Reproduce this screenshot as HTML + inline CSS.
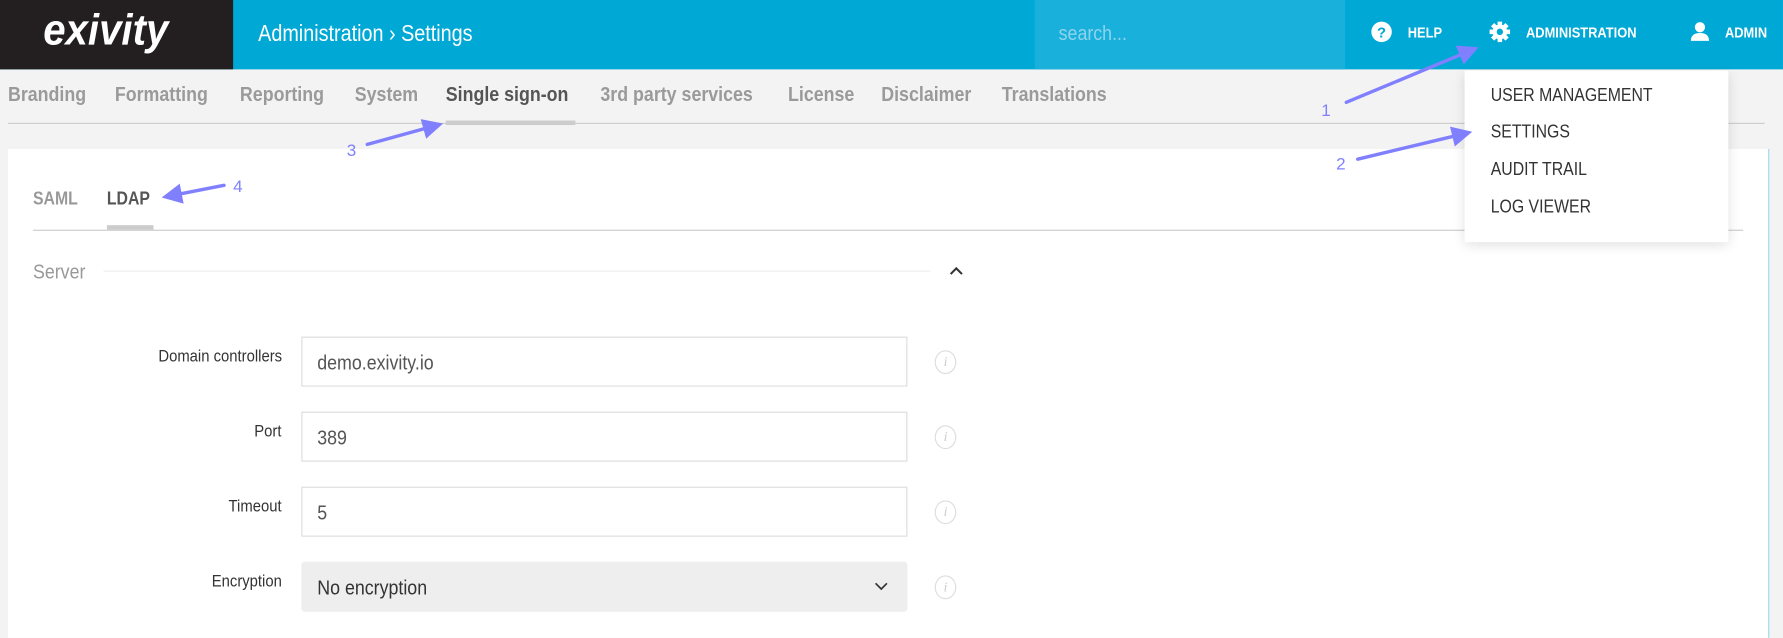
<!DOCTYPE html>
<html><head><meta charset="utf-8"><style>
html,body{margin:0;padding:0;width:1783px;height:626px;overflow:hidden;background:#f3f3f3;font-family:"Liberation Sans",sans-serif}
#w{position:absolute;left:0;top:0;width:1568px;height:551px;transform:scale(1.1371);transform-origin:0 0;background:#f3f3f3}
.a{position:absolute;white-space:nowrap}
.n{display:inline-block;transform:scaleX(.87);transform-origin:0 50%}
.tab{position:absolute;top:73px;font-size:18px;font-weight:bold;color:#9a9a9a}
.lbl{position:absolute;right:1320px;font-size:15px;color:#333;text-align:right}
.inp{position:absolute;left:265px;width:533px;height:44px;border:1px solid #ddd;background:#fff;box-sizing:border-box;font-size:18px;color:#555;padding-left:13px;line-height:44px}
.info{position:absolute;left:822px;width:17px;height:19px;border:1px solid #ddd;border-radius:50%;color:#ccc;font-size:12px;font-style:italic;text-align:center;line-height:19px;font-family:"Liberation Serif",serif}
.dd{position:absolute;left:1311px;font-size:16px;color:#333}
</style></head><body><div id="w">
<div class="a" style="left:0;top:0;width:1568px;height:61px;background:#00a8d6"></div>
<div class="a" style="left:0;top:0;width:205px;height:61px;background:#231f20"></div>
<div class="a" style="left:38px;top:6px;font-size:38px;font-style:italic;font-weight:bold;color:#fff"><span class="n" style="transform:scaleX(.93)">exivity</span></div>
<div class="a" style="left:227px;top:19px;font-size:20px;color:#fff"><span class="n">Administration › Settings</span></div>
<div class="a" style="left:910px;top:0;width:273px;height:61px;background:#1ab0dc"></div>
<div class="a" style="left:931px;top:19px;font-size:18px;color:#8fd3ec"><span class="n">search...</span></div>
<svg class="a" style="left:1205px;top:18px" width="20" height="20" viewBox="0 0 20 20"><circle cx="10" cy="10" r="9" fill="#fff"/><text x="10" y="15" font-size="13" font-weight="bold" text-anchor="middle" fill="#00a8d6" font-family="Liberation Sans">?</text></svg>
<div class="a" style="left:1238px;top:21px;font-size:13px;font-weight:bold;color:#fff"><span class="n">HELP</span></div>
<svg class="a" style="left:1309px;top:18px" width="20" height="20" viewBox="0 0 20 20"><g fill="#fff"><circle cx="10" cy="10" r="6.5"/><rect x="8" y="1" width="4" height="18"/><rect x="1" y="8" width="18" height="4"/><rect x="8" y="1" width="4" height="18" transform="rotate(45 10 10)"/><rect x="8" y="1" width="4" height="18" transform="rotate(-45 10 10)"/></g><circle cx="10" cy="10" r="2.8" fill="#00a8d6"/></svg>
<div class="a" style="left:1342px;top:21px;font-size:13px;font-weight:bold;color:#fff"><span class="n">ADMINISTRATION</span></div>
<svg class="a" style="left:1486px;top:18px" width="18" height="20" viewBox="0 0 18 20"><circle cx="9" cy="6" r="4.5" fill="#fff"/><path d="M1 18 Q1 11 9 11 Q17 11 17 18Z" fill="#fff"/></svg>
<div class="a" style="left:1517px;top:21px;font-size:13px;font-weight:bold;color:#fff"><span class="n">ADMIN</span></div>

<div class="tab" style="left:7px"><span class="n">Branding</span></div>
<div class="tab" style="left:101px"><span class="n">Formatting</span></div>
<div class="tab" style="left:211px"><span class="n">Reporting</span></div>
<div class="tab" style="left:312px"><span class="n">System</span></div>
<div class="tab" style="left:392px;color:#555"><span class="n">Single sign-on</span></div>
<div class="tab" style="left:528px"><span class="n">3rd party services</span></div>
<div class="tab" style="left:693px"><span class="n">License</span></div>
<div class="tab" style="left:775px"><span class="n">Disclaimer</span></div>
<div class="tab" style="left:881px"><span class="n">Translations</span></div>
<div class="a" style="left:7px;top:108px;width:1545px;height:1px;background:#ccc"></div>
<div class="a" style="left:392px;top:106px;width:114px;height:4px;background:#ccc"></div>

<div class="a" style="left:7px;top:131px;width:1548px;height:430px;background:#fff;border-right:1px solid #9ad7ea"></div>
<div class="a" style="left:29px;top:167px;font-size:16px;font-weight:bold;color:#999"><span class="n">SAML</span></div>
<div class="a" style="left:94px;top:167px;font-size:16px;font-weight:bold;color:#555"><span class="n">LDAP</span></div>
<div class="a" style="left:29px;top:202px;width:1504px;height:1px;background:#ccc"></div>
<div class="a" style="left:94px;top:198px;width:41px;height:4px;background:#ccc"></div>
<div class="a" style="left:29px;top:229px;font-size:18px;color:#999"><span class="n">Server</span></div>
<div class="a" style="left:91px;top:238px;width:727px;height:1px;background:#eee"></div>
<svg class="a" style="left:834px;top:233px" width="14" height="10" viewBox="0 0 14 10"><path d="M2 8 L7 3 L12 8" stroke="#333" stroke-width="1.8" fill="none"/></svg>

<div class="lbl" style="top:305px"><span class="n" style="transform-origin:100% 50%">Domain controllers</span></div>
<div class="inp" style="top:296px"><span class="n">demo.exivity.io</span></div>
<div class="info" style="top:308px">i</div>
<div class="lbl" style="top:371px"><span class="n" style="transform-origin:100% 50%">Port</span></div>
<div class="inp" style="top:362px"><span class="n">389</span></div>
<div class="info" style="top:374px">i</div>
<div class="lbl" style="top:437px"><span class="n" style="transform-origin:100% 50%">Timeout</span></div>
<div class="inp" style="top:428px"><span class="n">5</span></div>
<div class="info" style="top:440px">i</div>
<div class="lbl" style="top:503px"><span class="n" style="transform-origin:100% 50%">Encryption</span></div>
<div class="inp" style="top:494px;background:#eee;border-color:#eee;border-radius:3px;color:#333"><span class="n">No encryption</span></div>
<svg class="a" style="left:769px;top:512px" width="12" height="8" viewBox="0 0 12 8"><path d="M1 1 L6 6 L11 1" stroke="#333" stroke-width="1.5" fill="none"/></svg>
<div class="info" style="top:506px">i</div>

<div class="a" style="left:1288px;top:62px;width:232px;height:151px;background:#fff;box-shadow:0 3px 10px rgba(0,0,0,.12)"></div>
<div class="dd" style="top:76px"><span class="n">USER MANAGEMENT</span></div>
<div class="dd" style="top:108px"><span class="n">SETTINGS</span></div>
<div class="dd" style="top:141px"><span class="n">AUDIT TRAIL</span></div>
<div class="dd" style="top:174px"><span class="n">LOG VIEWER</span></div>

<svg class="a" style="left:0;top:0" width="1568" height="551">
<defs><marker id="m" markerWidth="6" markerHeight="6" refX="3" refY="3" orient="auto"><path d="M0 0 L6 3 L0 6Z" fill="#8080ff"/></marker></defs>
<g stroke="#8080ff" stroke-width="3" fill="none" marker-end="url(#m)" stroke-linecap="round">
<line x1="1184" y1="90" x2="1292" y2="45"/>
<line x1="1194" y1="140" x2="1286" y2="118"/>
<line x1="323" y1="127" x2="381" y2="111"/>
<line x1="197" y1="163" x2="151" y2="172"/>
</g>
<g fill="#8080ff" font-family="Liberation Sans" font-size="15">
<text x="1162" y="102">1</text><text x="1175" y="149">2</text><text x="305" y="137">3</text><text x="205" y="169">4</text>
</g></svg>
</div></body></html>
